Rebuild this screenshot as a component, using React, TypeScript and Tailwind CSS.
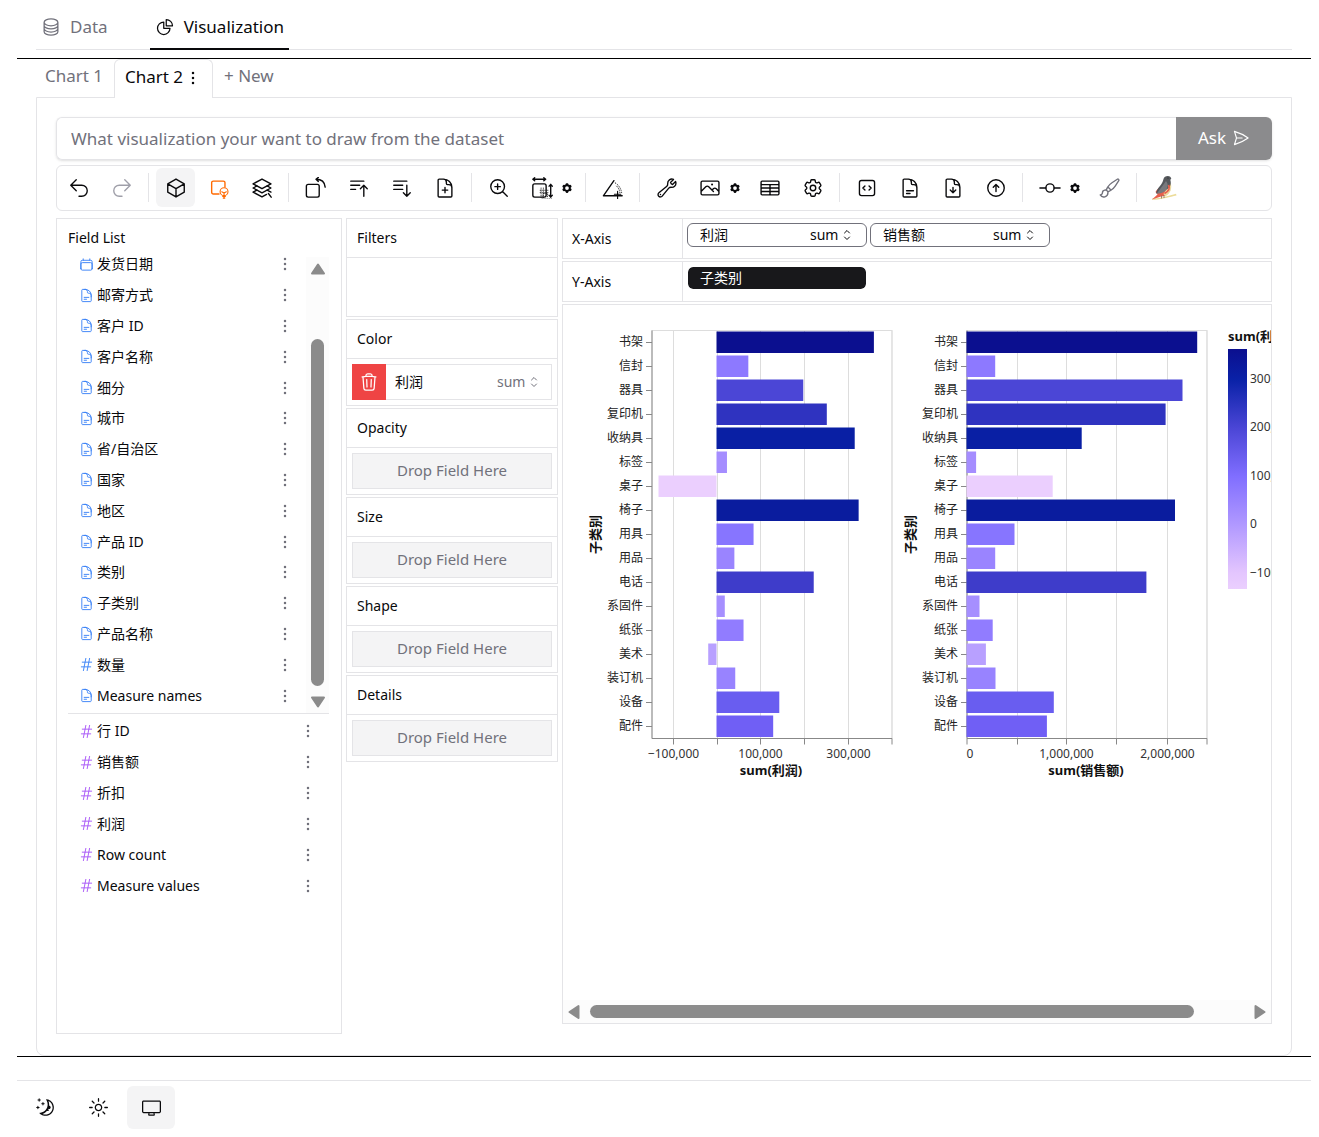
import React from "react";
import {
  HiOutlineArrowUturnLeft,
  HiOutlineArrowUturnRight,
  HiOutlineArrowUpCircle,
  HiOutlineBarsArrowDown,
  HiOutlineBarsArrowUp,
  HiOutlineCalendar,
  HiOutlineChartPie,
  HiOutlineChevronUpDown,
  HiOutlineCircleStack,
  HiOutlineCodeBracketSquare,
  HiOutlineCog6Tooth,
  HiOutlineCube,
  HiOutlineDocumentArrowDown,
  HiOutlineDocumentPlus,
  HiOutlineDocumentText,
  HiOutlineEllipsisVertical,
  HiOutlineHashtag,
  HiOutlineMagnifyingGlassPlus,
  HiOutlinePaintBrush,
  HiOutlinePaperAirplane,
  HiOutlinePhoto,
  HiOutlineTableCells,
  HiOutlineTrash,
  HiOutlineWrench,
  HiCog6Tooth,
} from "react-icons/hi2";
import { RxDesktop, RxMoon, RxSun } from "react-icons/rx";

const strokeProps = {
  viewBox: "0 0 24 24",
  fill: "none",
  stroke: "currentColor",
  strokeWidth: 1.5,
  strokeLinecap: "round",
  strokeLinejoin: "round",
  className: "size-[22px]",
} as const;

const SuggestIcon = () => (
  <svg {...strokeProps}>
    <path d="M12 18.500H5.800A1.800 1.800 0 0 1 4 16.700V6.300A1.800 1.800 0 0 1 5.800 4.500h10.900A1.800 1.800 0 0 1 18.500 6.300V11" />
    <g strokeWidth="1.200">
      <circle cx="17.500" cy="16" r="4.300" />
      <path d="M17.500 17v6M15 16.200l2.500 1.200 2.500-1.200M16 21.200h3M16.600 23h1.800" />
    </g>
  </svg>
);

const StackIcon = () => (
  <svg {...strokeProps}>
    <path d="M12 2.250 21.750 7.500 12 12.750 2.250 7.500z" />
    <path d="m6.400 9.750-4.150 2.250L12 17.250 21.750 12l-4.150-2.250" />
    <path d="m6.400 14.250-4.150 2.250L12 21.750l5-2.700M17.600 14.250l4.150 2.250M19 18l3 4" />
  </svg>
);

const TransposeIcon = () => (
  <svg {...strokeProps}>
    <rect x="1.500" y="8" width="14" height="14" rx="2" />
    <path d="M22 11C21.500 5.500 18 2.500 12 2.500M14.500 .5l-2.500 2 2.500 2.300" />
  </svg>
);

const ResizeIcon = () => (
  <svg {...strokeProps}>
    <path d="M2 2.500h14M4 .8 2 2.500l2 1.700M14 .8l2 1.700-2 1.700" />
    <rect x="2" y="7.500" width="14.500" height="14.500" rx="2" />
    <path d="M21.500 8v14M19.800 10l1.700-2 1.700 2M19.800 20l1.700 2 1.700-2" />
    <path
      strokeWidth="0.800"
      strokeDasharray="0.500 1.500"
      d="M11 12v11M13.500 12v11M10 14.500h10M10 17h10M12 24h11M13 22v-4h5v4"
    />
  </svg>
);

const AngleIcon = () => (
  <svg {...strokeProps}>
    <path d="M13 4 1.500 20.500h20.500" />
    <path strokeWidth="1.200" d="M17 15.500v9M13.500 18.800h7" />
    <path strokeWidth="1" strokeDasharray="0.500 2" d="M14.500 6.500c4 2.500 6.500 6.500 7 11.500M16 10c2 2 3 4 3.500 7" />
  </svg>
);

const CommitIcon = () => (
  <svg {...strokeProps}>
    <circle cx="12" cy="12" r="4.500" />
    <path d="M1 12h6.500M16.500 12H23" />
  </svg>
);

const BirdIcon = () => (
  <svg viewBox="0 0 26 26" className="size-[26px]">
    <path d="M1 23.500C8 24 18 20.500 25 18.800l.5 1.800C18 22 9 25.500 1 24.500z" fill="#ecdc9a" />
    <path d="M4.500 17C7 13 9 11.500 13 11.500l6 0c1 5-3 9.500-9 10L1 24.500 6.500 19.500z" fill="#e8604c" />
    <path d="M19.500 7.500c1.800 5 .5 11-5.500 14l-1.500-2.500z" fill="#ecd9a0" />
    <path d="M12.500 4C13 1 17.500 0 19.500 2l.8 1.800-1 .9c1.200 4 .3 7-3.200 9.500L5 18.500C6 12.500 11.500 10 12.500 4z" fill="#55585c" />
    <path d="M15 6c2.500 3 2.300 7-1.500 10.500-2.500 1.500-5 2-8 2.500z" fill="#77797d" />
    <path d="M17.500 10c1.500 3 .5 6-4 8.500" stroke="#e8604c" strokeWidth="1.800" fill="none" />
    <circle cx="17" cy="3" r=".6" fill="#222" />
    <path d="M13 20v3M10.500 20.500v3" stroke="#8a6f50" strokeWidth=".8" />
  </svg>
);

function Tool({
  label,
  children,
  active = false,
  tone = "text-zinc-950",
}: {
  label: string;
  children: React.ReactNode;
  active?: boolean;
  tone?: string;
}) {
  return (
    <button
      type="button"
      aria-label={label}
      className={`flex size-[39px] shrink-0 items-center justify-center rounded-md [&>svg]:shrink-0 ${tone} ${active ? "bg-zinc-100" : ""}`}
    >
      {children}
    </button>
  );
}

const SettingsDot = ({ label }: { label: string }) => (
  <button type="button" aria-label={label} className="-ml-1 flex w-[17px] shrink-0 justify-start">
    <HiCog6Tooth className="size-3" />
  </button>
);

const Sep = () => (
  <span className="flex h-[29px] w-[7px] shrink-0 justify-center">
    <span className="w-px bg-zinc-200" />
  </span>
);

const icon = "size-[22px]";

function Toolbar() {
  return (
    <div className="mt-[5px] flex items-center gap-1 rounded-md border border-zinc-200 px-[2px] pt-[2px] pb-[3px]">
      <Tool label="Undo"><HiOutlineArrowUturnLeft className={icon} /></Tool>
      <Tool label="Redo" tone="text-zinc-400"><HiOutlineArrowUturnRight className={icon} /></Tool>
      <Sep />
      <Tool label="Aggregation" active><HiOutlineCube className={icon} /></Tool>
      <Tool label="Mark type" tone="text-orange-500"><SuggestIcon /></Tool>
      <Tool label="Stack mode"><StackIcon /></Tool>
      <Sep />
      <Tool label="Transpose"><TransposeIcon /></Tool>
      <Tool label="Sort ascending"><HiOutlineBarsArrowUp className={icon} /></Tool>
      <Tool label="Sort descending"><HiOutlineBarsArrowDown className={icon} /></Tool>
      <Tool label="Axes resize"><HiOutlineDocumentPlus className={icon} /></Tool>
      <Sep />
      <Tool label="Zoom"><HiOutlineMagnifyingGlassPlus className={icon} /></Tool>
      <Tool label="Layout"><ResizeIcon /></Tool>
      <SettingsDot label="Layout settings" />
      <Sep />
      <Tool label="Coordinate system"><AngleIcon /></Tool>
      <Sep />
      <Tool label="Debug"><HiOutlineWrench className={icon} /></Tool>
      <Tool label="Export image"><HiOutlinePhoto className={icon} /></Tool>
      <SettingsDot label="Image settings" />
      <Tool label="Export data"><HiOutlineTableCells className={icon} /></Tool>
      <Tool label="Config"><HiOutlineCog6Tooth className={icon} /></Tool>
      <Sep />
      <Tool label="Export code"><HiOutlineCodeBracketSquare className={icon} /></Tool>
      <Tool label="Open document"><HiOutlineDocumentText className={icon} /></Tool>
      <Tool label="Download"><HiOutlineDocumentArrowDown className={icon} /></Tool>
      <Tool label="Upload"><HiOutlineArrowUpCircle className={icon} /></Tool>
      <Sep />
      <Tool label="Limit"><CommitIcon /></Tool>
      <SettingsDot label="Limit settings" />
      <Tool label="Painter" tone="text-zinc-500"><HiOutlinePaintBrush className={icon} /></Tool>
      <Sep />
      <Tool label="About"><BirdIcon /></Tool>
    </div>
  );
}

type FieldKind = "date" | "text" | "dim" | "measure";

const dimensions: [FieldKind, string][] = [
  ["date", "发货日期"],
  ["text", "邮寄方式"],
  ["text", "客户 ID"],
  ["text", "客户名称"],
  ["text", "细分"],
  ["text", "城市"],
  ["text", "省/自治区"],
  ["text", "国家"],
  ["text", "地区"],
  ["text", "产品 ID"],
  ["text", "类别"],
  ["text", "子类别"],
  ["text", "产品名称"],
  ["dim", "数量"],
  ["text", "Measure names"],
];

const measures: [FieldKind, string][] = [
  ["measure", "行 ID"],
  ["measure", "销售额"],
  ["measure", "折扣"],
  ["measure", "利润"],
  ["measure", "Row count"],
  ["measure", "Measure values"],
];

function FieldIcon({ kind }: { kind: FieldKind }) {
  if (kind === "date") return <HiOutlineCalendar className="size-[15px] text-[#3b82f6]" />;
  if (kind === "text") return <HiOutlineDocumentText className="size-[15px] text-[#3b82f6]" />;
  if (kind === "dim") return <HiOutlineHashtag className="size-[15px] text-[#3b82f6]" />;
  return <HiOutlineHashtag className="size-[15px] text-[#a855f7]" />;
}

const FieldRow = ({ kind, name }: { kind: FieldKind; name: string }) => (
  <li className="flex min-h-0 flex-1 items-center px-[11px]">
    <FieldIcon kind={kind} />
    <span className="ml-[3px] flex-1 truncate leading-5">{name}</span>
    <button type="button" aria-label={`${name} options`}>
      <HiOutlineEllipsisVertical className="size-5 text-zinc-500" />
    </button>
  </li>
);

const Arrow = ({ d }: { d: string }) => (
  <svg viewBox="0 0 16 16" className="size-4 shrink-0" fill="#8b8b8b" stroke="#8b8b8b" strokeWidth="2" strokeLinejoin="round">
    <path d={d} />
  </svg>
);

function FieldList() {
  return (
    <section className="min-h-[816px] w-[286px] shrink-0 border border-zinc-200 pr-3 pl-[11px]">
      <h2 className="flex h-[38px] items-center pb-[2px]">Field List</h2>
      <div className="flex h-[456px]">
        <div className="flex flex-1 flex-col justify-end overflow-hidden pb-[2px]">
          <ul className="flex h-[462px] shrink-0 flex-col">
            {dimensions.map(([kind, name]) => (
              <FieldRow key={name} kind={kind} name={name} />
            ))}
          </ul>
        </div>
        <div className="flex w-[23px] flex-col items-center bg-[#fcfcfc] pt-1 pb-[3px]">
          <Arrow d="M8 3.500 14 12.500H2z" />
          <div className="mt-[62px] mb-2 w-[13px] flex-1 rounded-full bg-[#8b8b8b]" />
          <Arrow d="M8 12.500 14 3.500H2z" />
        </div>
      </div>
      <ul className="flex h-[188px] flex-col border-t border-zinc-200 pt-[2px]">
        {measures.map(([kind, name]) => (
          <FieldRow key={name} kind={kind} name={name} />
        ))}
      </ul>
    </section>
  );
}

const AggSelect = ({ field, tone = "" }: { field: string; tone?: string }) => (
  <span className={`flex items-center ${tone}`}>
    <select aria-label={`${field} aggregation`} defaultValue="sum" className="appearance-none">
      <option>sum</option>
    </select>
    <HiOutlineChevronUpDown className="size-4" />
  </span>
);

const Channel = ({ title, children }: { title: string; children: React.ReactNode }) => (
  <section className="border border-zinc-200">
    <h2 className="flex h-[39px] items-center border-b border-zinc-200 px-[10px] pb-px">{title}</h2>
    {children}
  </section>
);

function Encodings() {
  return (
    <div className="flex w-[212px] shrink-0 flex-col gap-[2px]">
      <Channel title="Filters">
        <div className="h-[58px]" />
      </Channel>
      <Channel title="Color">
        <div className="p-[5px]">
          <div className="flex h-9 items-stretch border border-zinc-200">
            <button
              type="button"
              aria-label="Remove 利润"
              className="-my-px -ml-px flex w-[34px] items-center justify-center bg-[#ef4444] text-white"
            >
              <HiOutlineTrash className="size-5" />
            </button>
            <span className="flex flex-1 items-center pb-px pl-[9px]">利润</span>
            <span className="flex pr-[9px] pb-px">
              <AggSelect field="利润" tone="text-zinc-500" />
            </span>
          </div>
        </div>
      </Channel>
      {["Opacity", "Size", "Shape", "Details"].map((title) => (
        <Channel key={title} title={title}>
          <div className="p-[5px]">
            <div className="flex h-9 items-center justify-center border border-zinc-200 bg-zinc-100 pb-px text-[15px] text-zinc-500">
              Drop Field Here
            </div>
          </div>
        </Channel>
      ))}
    </div>
  );
}

const Pill = ({ name }: { name: string }) => (
  <div className="flex h-6 w-[180px] items-center justify-between rounded-md border border-zinc-500 pr-[11px] pb-px pl-3">
    <span>{name}</span>
    <AggSelect field={name} />
  </div>
);

const Shelf = ({ title, children }: { title: string; children: React.ReactNode }) => (
  <section className="flex h-[41px] border border-zinc-200">
    <h2 className="flex w-[120px] items-center border-r border-zinc-200 pb-px pl-[9px]">{title}</h2>
    <div className="flex flex-1 gap-[3px] p-1">{children}</div>
  </section>
);

/* Sub-category rows: label, profit (thousands), sales (thousands), bar colour. */
const rows: [string, number, number, string][] = [
  ["书架", 361, 2307, "#0b0f8f"],
  ["信封", 73, 287, "#8d79ff"],
  ["器具", 199, 2160, "#4b46d6"],
  ["复印机", 253, 1991, "#2f33c0"],
  ["收纳具", 317, 1152, "#091fa4"],
  ["标签", 24, 96, "#a58dff"],
  ["桌子", -133, 862, "#ebcffe"],
  ["椅子", 326, 2085, "#0a1c9e"],
  ["用具", 85, 480, "#8775ff"],
  ["用品", 41, 287, "#9a84ff"],
  ["电话", 223, 1799, "#3e3cca"],
  ["系固件", 19, 130, "#a68fff"],
  ["纸张", 62, 262, "#917cff"],
  ["美术", -19, 194, "#b8a0ff"],
  ["装订机", 43, 290, "#9883ff"],
  ["设备", 144, 873, "#695df0"],
  ["配件", 130, 804, "#705ff5"],
];

type Tick = { x: number; label?: string; at?: number };

function BarPlot({
  left,
  zero,
  scale,
  pick,
  ticks,
  title,
}: {
  left: number;
  zero: number;
  scale: number;
  pick: 1 | 2;
  ticks: Tick[];
  title: string;
}) {
  return (
    <g transform={`translate(${left} 25.5)`}>
      <rect width="240" height="408" fill="none" stroke="#ddd" />
      {ticks.map((t) => (
        <g key={t.x}>
          <line x1={t.x} x2={t.x} y1="0" y2="408" stroke="#ddd" />
          <line x1={t.x} x2={t.x} y1="408" y2="414" stroke="#888" />
          {t.label && (
            <text x={t.at ?? t.x} y="427" textAnchor="middle" fontSize="12" fill="#333">
              {t.label}
            </text>
          )}
        </g>
      ))}
      <path d="M0 0v408h240" fill="none" stroke="#888" />
      {rows.map((r, i) => {
        const w = r[pick] * scale;
        return (
          <g key={r[0]}>
            <line x1="-6" x2="0" y1={i * 24 + 12} y2={i * 24 + 12} stroke="#888" />
            <text x="-9" y={i * 24 + 15} textAnchor="end" fontSize="12" fill="#222">
              {r[0]}
            </text>
            <rect x={zero + Math.min(0, w)} y={i * 24 + 1} width={Math.abs(w)} height="21.500" fill={r[3]} />
          </g>
        );
      })}
      <text x="119" y="444" textAnchor="middle" fontSize="13" fontWeight="700" fill="#111">
        {title}
      </text>
      <text transform="translate(-52 204) rotate(-90)" textAnchor="middle" fontSize="13" fontWeight="700" fill="#111">
        子类别
      </text>
    </g>
  );
}

function Chart() {
  return (
    <svg width="780" height="490" viewBox="0 0 780 490" className="shrink-0" role="img" aria-label="sum(利润) and sum(销售额) by 子类别">
      <defs>
        <linearGradient id="ramp" x1="0" y1="0" x2="0" y2="1">
          <stop offset="0" stopColor="#0b0f8f" />
          <stop offset="0.130" stopColor="#0a22a8" />
          <stop offset="0.330" stopColor="#4b46d6" />
          <stop offset="0.530" stopColor="#806eff" />
          <stop offset="0.730" stopColor="#b098ff" />
          <stop offset="0.930" stopColor="#e3c5fe" />
          <stop offset="1" stopColor="#ebcffe" />
        </linearGradient>
      </defs>
      <BarPlot
        left={89}
        zero={64.5}
        scale={0.436}
        pick={1}
        title="sum(利润)"
        ticks={[
          { x: 21.5, label: "−100,000" },
          { x: 65.5 },
          { x: 108.5, label: "100,000" },
          { x: 152.5 },
          { x: 196.5, label: "300,000" },
          { x: 240 },
        ]}
      />
      <BarPlot
        left={404}
        zero={-0.5}
        scale={0.1}
        pick={2}
        title="sum(销售额)"
        ticks={[
          { x: 0, label: "0", at: 3 },
          { x: 50.5 },
          { x: 99.5, label: "1,000,000" },
          { x: 149.5 },
          { x: 200.5, label: "2,000,000" },
          { x: 240 },
        ]}
      />
      <text x="665" y="36" fontSize="13" fontWeight="700" fill="#111">
        sum(利润)
      </text>
      <rect x="665" y="44" width="19" height="240" fill="url(#ramp)" />
      {["300,000", "200,000", "100,000", "0", "−100,000"].map((t, i) => (
        <text key={t} x="687" y={77.5 + i * 48.600} fontSize="12" fill="#333">
          {t}
        </text>
      ))}
    </svg>
  );
}

function Canvas() {
  return (
    <div className="flex min-w-0 flex-1 flex-col gap-[2px] pb-[10px]">
      <Shelf title="X-Axis">
        <Pill name="利润" />
        <Pill name="销售额" />
      </Shelf>
      <Shelf title="Y-Axis">
        <div className="flex h-6 w-[180px] items-center rounded-md border border-white bg-zinc-900 bg-clip-padding pb-px pl-3 text-white">
          子类别
        </div>
      </Shelf>
      <section className="flex flex-1 flex-col border border-zinc-200">
        <div className="flex flex-1 items-start overflow-hidden">
          <Chart />
        </div>
        <div className="flex h-[23px] items-center bg-[#fcfcfc] px-[3px]">
          <Arrow d="M3.500 8 12.500 2v12z" />
          <div className="mr-[58px] ml-2 h-[13px] flex-1 rounded-full bg-[#8b8b8b]" />
          <Arrow d="M12.500 8 3.500 2v12z" />
        </div>
      </section>
    </div>
  );
}

const SideButton = ({ label, active = false, children }: { label: string; active?: boolean; children: React.ReactNode }) => (
  <button
    type="button"
    aria-label={label}
    className={`flex h-[43px] w-12 items-center justify-center rounded-md ${active ? "bg-zinc-100" : ""}`}
  >
    {children}
  </button>
);

export default function App() {
  return (
    <div className="bg-white pr-2 pl-[17px] font-['Noto_Sans','Noto_Sans_CJK_SC',sans-serif] text-[14px] text-zinc-950">
      <nav className="mx-[19px] flex h-[50px] gap-[33px] border-b border-zinc-200 text-[17px]">
        <button type="button" className="-mb-px flex items-center gap-[9px] border-b-2 border-transparent pt-[6px] pr-[9px] pl-[5px] text-zinc-500">
          <HiOutlineCircleStack className="size-5" />
          <span>Data</span>
        </button>
        <button
          type="button"
          className="-mb-px flex items-center gap-[9px] border-b-2 border-zinc-950 px-[5px] pt-[6px]"
        >
          <HiOutlineChartPie className="size-5" />
          <span>Visualization</span>
        </button>
      </nav>

      <main className="mt-2 border-y border-black px-[19px]">
        <div className="flex h-[38px] items-stretch text-[17px] text-zinc-500">
          <button type="button" className="w-[78px] pb-1 pl-[9px] text-left">
            Chart 1
          </button>
          <div className="-mb-px flex w-[99px] items-center rounded-t-md border border-b-0 border-zinc-200 bg-white pb-[5px] pl-[10px] text-zinc-950">
            <button type="button">Chart 2</button>
            <button type="button" aria-label="Chart 2 options">
              <HiOutlineEllipsisVertical className="mt-[2px] size-5" />
            </button>
          </div>
          <button type="button" className="pb-1 pl-[11px]">
            + New
          </button>
        </div>

        <div className="rounded-b-lg border border-zinc-200 px-[19px] pt-[19px] pb-[21px]">
          <form className="flex h-[43px] rounded-md text-[17px] shadow-sm" onSubmit={(e) => e.preventDefault()}>
            <input
              aria-label="Question"
              placeholder="What visualization your want to draw from the dataset"
              className="min-w-0 flex-1 rounded-l-md border border-r-0 border-zinc-200 px-[14px] placeholder:text-zinc-500"
            />
            <button type="submit" className="flex w-24 items-center justify-center gap-[6px] rounded-r-md bg-[#8b8b8d] pb-px text-white">
              Ask <HiOutlinePaperAirplane className="size-[18px]" />
            </button>
          </form>
          <Toolbar />
          <div className="mt-[7px] flex gap-1">
            <FieldList />
            <Encodings />
            <Canvas />
          </div>
        </div>
      </main>

      <footer className="mt-[23px] flex gap-[5px] border-t border-zinc-200 pt-[5px] pb-2 pl-1">
        <SideButton label="Dark theme"><RxMoon className="size-[19px]" /></SideButton>
        <SideButton label="Light theme"><RxSun className="size-[19px]" /></SideButton>
        <SideButton label="System theme" active><RxDesktop className="size-[19px]" /></SideButton>
      </footer>
    </div>
  );
}
